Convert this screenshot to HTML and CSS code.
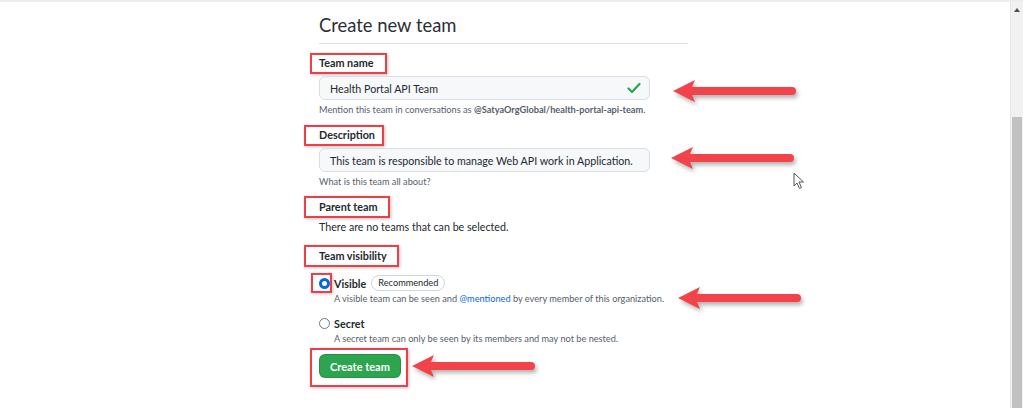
FILE: index.html
```html
<!DOCTYPE html>
<html lang="en">
<head>
  <meta charset="UTF-8">
  <title>Create new team</title>
  <link rel="stylesheet" href="styles.css">
</head>
<body>
  <div class="page">
    <div class="content">
      <form class="team-form">
        <h1 class="form-title">Create new team</h1>

        <div class="field">
          <label class="field-label">Team name<span class="mark mark-name"></span></label>
          <div class="input-box">
            <span class="input-text">Health Portal API Team</span>
            <svg class="check" width="14" height="12" viewBox="0 0 14 12"><path d="M1.5 6.5 L5 10 L12.5 2" fill="none" stroke="#2da44e" stroke-width="2.2" stroke-linecap="round" stroke-linejoin="round"/></svg>
            <svg class="arrow arrow-a" width="128" height="28" viewBox="0 0 128 28"><path d="M1 12 L23 1 L20 8 L120 8 A4 4 0 0 1 120 16 L20 16 L23 23 Z"/></svg>
          </div>
          <p class="hint">Mention this team in conversations as <b>@SatyaOrgGlobal/health-portal-api-team</b>.</p>
        </div>

        <div class="field">
          <label class="field-label">Description<span class="mark mark-desc"></span></label>
          <div class="input-box">
            <span class="input-text">This team is responsible to manage Web API work in Application.</span>
            <svg class="arrow arrow-b" width="128" height="28" viewBox="0 0 128 28"><path d="M1 12 L23 1 L20 8 L120 8 A4 4 0 0 1 120 16 L20 16 L23 23 Z"/></svg>
          </div>
          <p class="hint">What is this team all about?</p>
        </div>

        <div class="field field-parent">
          <label class="field-label">Parent team<span class="mark mark-parent"></span></label>
          <p class="plain">There are no teams that can be selected.</p>
        </div>

        <div class="field field-vis">
          <label class="field-label">Team visibility<span class="mark mark-vis"></span></label>

          <div class="option">
            <div class="option-row">
              <span class="radio checked"><span class="mark mark-radio"></span></span>
              <span class="option-name">Visible</span>
              <span class="pill">Recommended</span>
            </div>
            <p class="option-note">A visible team can be seen and <a href="#">@mentioned</a> by every member of this organization.
              <svg class="arrow arrow-c" width="128" height="28" viewBox="0 0 128 28"><path d="M1 12 L23 1 L20 8 L120 8 A4 4 0 0 1 120 16 L20 16 L23 23 Z"/></svg>
            </p>
          </div>

          <div class="option option-secret">
            <div class="option-row">
              <span class="radio"></span>
              <span class="option-name">Secret</span>
            </div>
            <p class="option-note">A secret team can only be seen by its members and may not be nested.</p>
          </div>
        </div>

        <div class="actions">
          <button type="button" class="btn-primary">Create team</button>
          <span class="mark mark-btn"></span>
          <svg class="arrow arrow-d" width="128" height="28" viewBox="0 0 128 28"><path d="M1 12 L23 1 L20 8 L120 8 A4 4 0 0 1 120 16 L20 16 L23 23 Z"/></svg>
        </div>
      </form>

      <svg class="cursor" width="12" height="18" viewBox="0 0 12 18"><path d="M1 1 L1 14 L4 11 L6.5 16.5 L8.5 15.5 L6 10 L10.5 10 Z" fill="#fff" stroke="#555" stroke-width="1"/></svg>
    </div>

    <div class="scrollbar">
      <span class="scroll-up"></span>
      <span class="scroll-thumb"></span>
    </div>
  </div>
</body>
</html>
```

FILE: styles.css
```css
* {
  box-sizing: border-box;
}

body {
  margin: 0;
  font-family: Lato, "Noto Sans", Arial, sans-serif;
  color: #24292f;
  background: #fff;
}

.page {
  display: flex;
  height: 408px;
  border-top: 2px solid #ececec;
  overflow: hidden;
}

.content {
  position: relative;
  flex: 1;
  padding-left: 319px;
}

.team-form {
  width: 369px;
  white-space: nowrap;
}

.form-title {
  margin: 0;
  padding-top: 9px;
  padding-bottom: 4px;
  font-size: 18.4px;
  line-height: 28px;
  font-weight: 400;
  color: #2b3036;
  border-bottom: 1px solid #d8dee4;
}

.field {
  margin-top: 10px;
}

.field + .field {
  margin-top: 9px;
}

.field-parent {
  margin-top: 10px;
}

.field.field-vis {
  margin-top: 12px;
}

.field-label {
  position: relative;
  display: block;
  font-size: 10.8px;
  font-weight: 700;
  line-height: 18px;
}

.input-box {
  position: relative;
  display: flex;
  align-items: center;
  justify-content: space-between;
  width: 331px;
  height: 24px;
  margin-top: 4px;
  padding: 0 10px;
  border: 1px solid #d8dee4;
  border-radius: 6px;
  background: #f6f8fa;
  font-size: 10.7px;
}

.check {
  margin-right: -2px;
}

.hint {
  margin: 3px 0 0;
  font-size: 9.2px;
  line-height: 14px;
  color: #57606a;
}

.hint b {
  font-weight: 700;
}

.plain {
  margin: 3px 0 0;
  font-size: 10.7px;
  line-height: 16px;
}

.option {
  position: relative;
  margin-top: 10px;
  padding-left: 15px;
}

.option-secret {
  margin-top: 9px;
}

.option-row {
  display: flex;
  align-items: center;
  height: 16px;
}

.radio {
  position: absolute;
  left: 0;
  top: 3px;
  width: 11px;
  height: 11px;
  border: 1px solid #6e7781;
  border-radius: 50%;
  background: #fff;
}

.radio.checked {
  border: 3px solid #0969da;
}

.option-name {
  font-size: 10.8px;
  font-weight: 700;
}

.pill {
  margin-left: 5px;
  padding: 0 6px;
  border: 1px solid #d0d7de;
  border-radius: 10px;
  font-size: 9.2px;
  line-height: 14px;
  color: #24292f;
}

.option-note {
  position: relative;
  margin: 1px 0 0;
  font-size: 9.2px;
  line-height: 14px;
  color: #57606a;
}

.option-note a {
  color: #0969da;
  text-decoration: none;
}

.actions {
  position: relative;
  margin-top: 8px;
}

.btn-primary {
  height: 24px;
  padding: 0 10px;
  border: 1px solid rgba(27, 31, 36, 0.15);
  border-radius: 6px;
  background: #2da44e;
  color: #fff;
  font-family: inherit;
  font-size: 11px;
  font-weight: 700;
}

/* red annotation boxes */
.mark {
  position: absolute;
  border: 2px solid #ec3f47;
  box-shadow: 1px 1px 3px rgba(0, 0, 0, 0.25);
  pointer-events: none;
}

.mark-name {
  left: -9px;
  top: -1px;
  width: 77px;
  height: 21px;
}

.mark-desc {
  left: -15px;
  top: -1px;
  width: 80px;
  height: 21px;
}

.mark-parent {
  left: -15px;
  top: -2px;
  width: 86px;
  height: 22px;
}

.mark-vis {
  left: -15px;
  top: -2px;
  width: 95px;
  height: 22px;
}

.mark-radio {
  left: -11px;
  top: -8px;
  width: 21px;
  height: 20px;
}

.mark-btn {
  left: -9px;
  top: -6px;
  width: 98px;
  height: 39px;
}

/* red arrows */
.arrow {
  position: absolute;
  fill: #f2434a;
  filter: drop-shadow(2px 3px 2px rgba(0, 0, 0, 0.3));
}

.arrow-a {
  left: 352px;
  top: 2px;
}

.arrow-b {
  left: 350px;
  top: -3px;
}

.arrow-c {
  left: 343px;
  top: -6px;
}

.arrow-d {
  left: 92px;
  top: 0;
}

.cursor {
  position: absolute;
  left: 793px;
  top: 170px;
}

/* fake browser scrollbar */
.scrollbar {
  display: flex;
  flex-direction: column;
  width: 13px;
  background: #f1f1f1;
  border-left: 1px solid #e6e6e6;
}

.scroll-up {
  height: 15px;
  position: relative;
}

.scroll-up::after {
  content: "";
  position: absolute;
  left: 3px;
  top: 6px;
  border-left: 3px solid transparent;
  border-right: 3px solid transparent;
  border-bottom: 4px solid #505050;
}

.scroll-thumb {
  margin-top: 100px;
  flex: 1;
  margin-left: 1px;
  margin-right: 1px;
  background: #c1c1c1;
}
```
